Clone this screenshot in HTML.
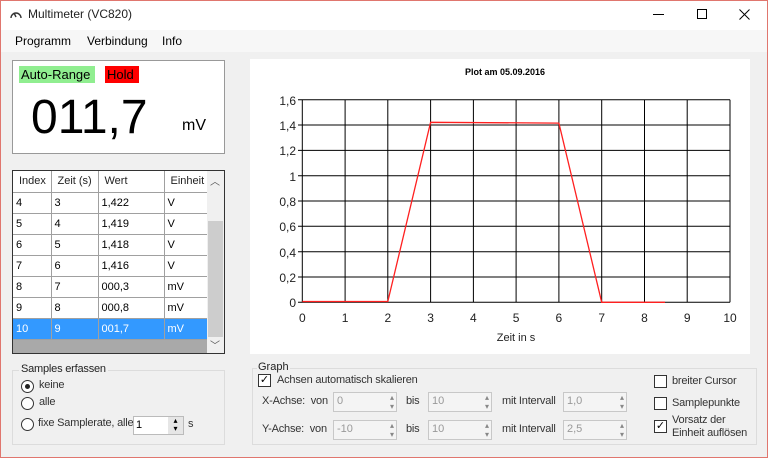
<!DOCTYPE html>
<html><head><meta charset="utf-8"><style>
*{box-sizing:border-box;margin:0;padding:0}
body{width:768px;height:458px;overflow:hidden;background:#f0f0f0;font-family:"Liberation Sans",sans-serif;font-size:12px;color:#000;position:relative}
.abs{position:absolute}
.win{position:absolute;left:0;top:0;width:768px;height:458px;border:1px solid #e0766e;pointer-events:none}
table{border-collapse:collapse}
td{border-right:1px solid #a0a0a0;border-bottom:1px solid #a0a0a0;padding-left:3px;height:21px;font-size:11px}
.sp{position:absolute;height:20px;border:1px solid #c8c8c8;background:#f4f4f4;color:#999;font-size:11px;padding:2px 3px}
.sp::after{content:"▴\A▾";white-space:pre;position:absolute;right:2px;top:0;font-size:8px;line-height:9px;color:#888}
.lbl{position:absolute;font-size:11px;color:#333;letter-spacing:-0.2px}
.cb{position:absolute;width:13px;height:13px;border:1px solid #333;background:#fff;font-size:11px;line-height:11px;text-align:center}
.rb{position:absolute;width:13px;height:13px;border:1px solid #333;border-radius:50%;background:#fff}
</style></head><body>
<div class="abs" style="left:0;top:0;width:768px;height:30px;background:#fff"></div>
<svg class="abs" style="left:9px;top:8px" width="14" height="12"><path d="M2 10 A5 5 0 1 1 12 10" fill="none" stroke="#333" stroke-width="1.4"/><path d="M7 9 L5 5" stroke="#333" stroke-width="1.4"/></svg>
<div class="abs" style="left:28px;top:7px;font-size:12px;color:#222">Multimeter (VC820)</div>
<div class="abs" style="left:653px;top:14px;width:11px;height:1px;background:#000"></div>
<div class="abs" style="left:697px;top:9px;width:10px;height:10px;border:1px solid #000"></div>
<svg class="abs" style="left:739px;top:9px" width="11" height="11"><path d="M0.5 0.5L10.5 10.5M10.5 0.5L0.5 10.5" stroke="#000" stroke-width="1"/></svg>
<div class="abs" style="left:0;top:30px;width:768px;height:22px;background:#f7f7f7"></div>
<div class="abs" style="left:15px;top:34px">Programm</div>
<div class="abs" style="left:87px;top:34px">Verbindung</div>
<div class="abs" style="left:162px;top:34px">Info</div>

<div class="abs" style="left:12px;top:60px;width:213px;height:94px;background:#fff;border:1px solid #999"></div>
<div class="abs" style="left:19px;top:66px;width:76px;height:17px;background:#90ee90;font-size:13px;padding:1px 2px">Auto-Range</div>
<div class="abs" style="left:105px;top:66px;width:34px;height:17px;background:#ff0000;font-size:13px;padding:1px 2px">Hold</div>
<div class="abs" style="left:31px;top:92px;font-size:48px;line-height:52px">011,7</div>
<div class="abs" style="left:182px;top:117px;font-size:16px">mV</div>

<div class="abs" style="left:12px;top:170px;width:213px;height:184px;border:1px solid #333;background:#a9a9a9;overflow:hidden">
<table style="background:#fff">
<tr style="color:#222"><td style="width:38px;padding-left:6px">Index</td><td style="width:47px;padding-left:6px">Zeit (s)</td><td style="width:66px;padding-left:6px">Wert</td><td style="width:43px;padding-left:6px">Einheit</td></tr>
<tr><td>4</td><td>3</td><td>1,422</td><td>V</td></tr>
<tr><td>5</td><td>4</td><td>1,419</td><td>V</td></tr>
<tr><td>6</td><td>5</td><td>1,418</td><td>V</td></tr>
<tr><td>7</td><td>6</td><td>1,416</td><td>V</td></tr>
<tr><td>8</td><td>7</td><td>000,3</td><td>mV</td></tr>
<tr><td>9</td><td>8</td><td>000,8</td><td>mV</td></tr>
<tr style="background:#3399ff;color:#fff"><td>10</td><td>9</td><td>001,7</td><td>mV</td></tr>
</table>
<div class="abs" style="left:194px;top:0;width:17px;height:182px;background:#f0f0f0"></div>
<div class="abs" style="left:195px;top:50px;width:15px;height:116px;background:#cdcdcd"></div>
<div class="abs" style="left:197px;top:2px;font-size:10px;color:#555">︿</div>
<div class="abs" style="left:197px;top:166px;font-size:10px;color:#555">﹀</div>
</div>

<div class="abs" style="left:12px;top:370px;width:213px;height:75px;border:1px solid #dcdcdc"></div>
<div class="abs" style="left:19px;top:363px;background:#f0f0f0;padding:0 2px;font-size:11px;color:#222;letter-spacing:-0.2px">Samples erfassen</div>
<div class="rb" style="left:21px;top:380px"><div class="abs" style="left:3px;top:3px;width:5px;height:5px;border-radius:50%;background:#222"></div></div>
<div class="lbl" style="left:39px;top:379px">keine</div>
<div class="rb" style="left:21px;top:397px"></div>
<div class="lbl" style="left:39px;top:396px">alle</div>
<div class="rb" style="left:21px;top:418px"></div>
<div class="lbl" style="left:38px;top:417px">fixe Samplerate, alle</div>
<div class="abs" style="left:133px;top:416px;width:51px;height:19px;border:1px solid #bbb;background:#fff;font-size:11px;padding:2px 2px">1</div>
<div class="abs" style="left:168px;top:417px;width:15px;height:17px;background:#e6e6e6;font-size:8px;line-height:8px;text-align:center">▴<br>▾</div>
<div class="lbl" style="left:188px;top:418px">s</div>

<div class="abs" style="left:250px;top:59px;width:500px;height:295px;background:#fff"></div>
<div class="abs" style="left:250px;top:67px;width:510px;text-align:center;font-size:9px;font-weight:bold">Plot am 05.09.2016</div>
<svg class="abs" style="left:250px;top:55px" width="510" height="300" font-family="Liberation Sans" font-size="12" fill="#222">
<g stroke="#000" stroke-width="1">
<line x1="52.3" y1="44.7" x2="52.3" y2="247.3"/><line x1="95.1" y1="44.7" x2="95.1" y2="247.3"/><line x1="137.8" y1="44.7" x2="137.8" y2="247.3"/><line x1="180.6" y1="44.7" x2="180.6" y2="247.3"/><line x1="223.4" y1="44.7" x2="223.4" y2="247.3"/><line x1="266.1" y1="44.7" x2="266.1" y2="247.3"/><line x1="308.9" y1="44.7" x2="308.9" y2="247.3"/><line x1="351.7" y1="44.7" x2="351.7" y2="247.3"/><line x1="394.5" y1="44.7" x2="394.5" y2="247.3"/><line x1="437.2" y1="44.7" x2="437.2" y2="247.3"/><line x1="480" y1="44.7" x2="480" y2="247.3"/>
<line x1="48" y1="44.7" x2="480" y2="44.7"/><line x1="48" y1="70" x2="480" y2="70"/><line x1="48" y1="95.4" x2="480" y2="95.4"/><line x1="48" y1="120.7" x2="480" y2="120.7"/><line x1="48" y1="146" x2="480" y2="146"/><line x1="48" y1="171.3" x2="480" y2="171.3"/><line x1="48" y1="196.7" x2="480" y2="196.7"/><line x1="48" y1="222" x2="480" y2="222"/><line x1="48" y1="247.3" x2="480" y2="247.3"/>
</g>
<polyline fill="none" stroke="#ff2020" stroke-width="1.3" points="52.3,246.5 137.8,246.5 180.6,67.3 308.9,68.1 351.7,247.3 394.5,247.3 415,247.3"/>
<g text-anchor="end"><text x="46" y="50">1,6</text><text x="46" y="75">1,4</text><text x="46" y="100">1,2</text><text x="46" y="126">1</text><text x="46" y="151">0,8</text><text x="46" y="176">0,6</text><text x="46" y="202">0,4</text><text x="46" y="227">0,2</text><text x="46" y="252">0</text></g>
<g text-anchor="middle"><text x="52.3" y="267">0</text><text x="95.1" y="267">1</text><text x="137.8" y="267">2</text><text x="180.6" y="267">3</text><text x="223.4" y="267">4</text><text x="266.1" y="267">5</text><text x="308.9" y="267">6</text><text x="351.7" y="267">7</text><text x="394.5" y="267">8</text><text x="437.2" y="267">9</text><text x="480" y="267">10</text><text x="266" y="286" font-size="11">Zeit in s</text></g>
</svg>

<div class="abs" style="left:252px;top:368px;width:505px;height:77px;border:1px solid #dcdcdc"></div>
<div class="abs" style="left:257px;top:361px;background:#f0f0f0;padding:0 1px;font-size:11px;color:#222">Graph</div>
<div class="cb" style="left:258px;top:374px">✓</div>
<div class="lbl" style="left:277px;top:374px">Achsen automatisch skalieren</div>
<div class="lbl" style="left:262px;top:395px">X-Achse:&nbsp; von</div>
<div class="sp" style="left:333px;top:392px;width:64px">0</div>
<div class="lbl" style="left:406px;top:395px">bis</div>
<div class="sp" style="left:428px;top:392px;width:64px">10</div>
<div class="lbl" style="left:502px;top:395px">mit Intervall</div>
<div class="sp" style="left:563px;top:392px;width:64px">1,0</div>
<div class="lbl" style="left:262px;top:423px">Y-Achse:&nbsp; von</div>
<div class="sp" style="left:333px;top:420px;width:64px">-10</div>
<div class="lbl" style="left:406px;top:423px">bis</div>
<div class="sp" style="left:428px;top:420px;width:64px">10</div>
<div class="lbl" style="left:502px;top:423px">mit Intervall</div>
<div class="sp" style="left:563px;top:420px;width:64px">2,5</div>
<div class="cb" style="left:654px;top:375px"></div>
<div class="lbl" style="left:672px;top:375px">breiter Cursor</div>
<div class="cb" style="left:654px;top:397px"></div>
<div class="lbl" style="left:672px;top:397px">Samplepunkte</div>
<div class="cb" style="left:654px;top:420px">✓</div>
<div class="lbl" style="left:672px;top:414px;line-height:13px">Vorsatz der<br>Einheit auflösen</div>
<div class="win"></div>
</body></html>
